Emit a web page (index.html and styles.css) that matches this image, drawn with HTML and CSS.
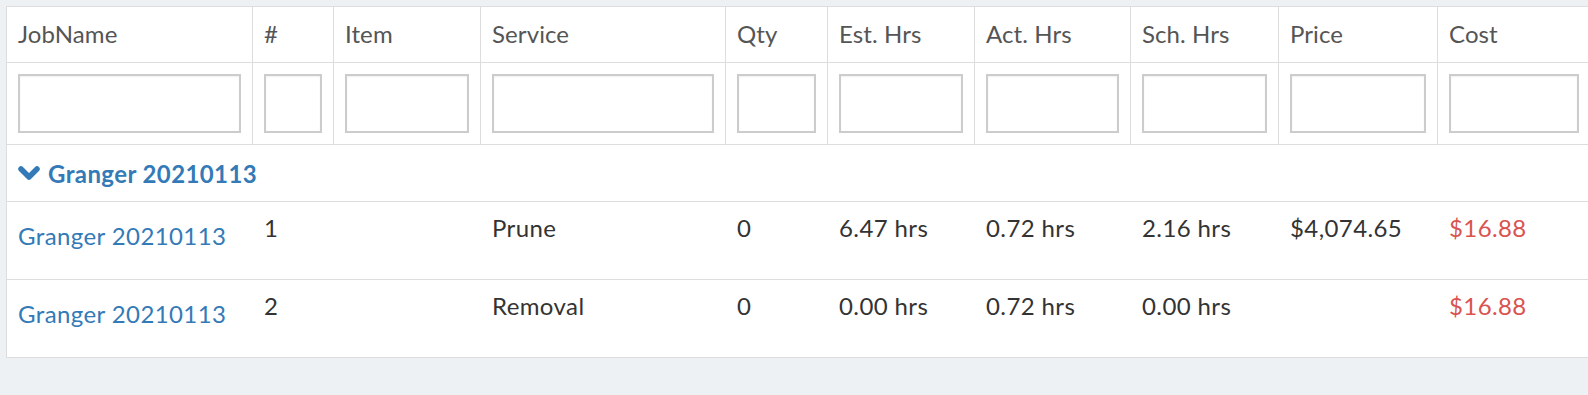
FILE: index.html
```html
<!DOCTYPE html>
<html lang="en">
<head>
<meta charset="utf-8">
<title>Jobs grid</title>
<link rel="stylesheet" href="styles.css">
</head>
<body>
<div class="page">
  <table class="grid">
    <colgroup>
      <col class="c-job"><col class="c-num"><col class="c-item"><col class="c-service"><col class="c-qty">
      <col class="c-est"><col class="c-act"><col class="c-sch"><col class="c-price"><col class="c-cost">
    </colgroup>
    <thead>
      <tr class="head-row">
        <th>JobName</th><th>#</th><th>Item</th><th>Service</th><th>Qty</th>
        <th>Est. Hrs</th><th>Act. Hrs</th><th>Sch. Hrs</th><th>Price</th><th>Cost</th>
      </tr>
      <tr class="filter-row">
        <th><input class="filter" type="text"></th>
        <th><input class="filter" type="text"></th>
        <th><input class="filter" type="text"></th>
        <th><input class="filter" type="text"></th>
        <th><input class="filter" type="text"></th>
        <th><input class="filter" type="text"></th>
        <th><input class="filter" type="text"></th>
        <th><input class="filter" type="text"></th>
        <th><input class="filter" type="text"></th>
        <th><input class="filter" type="text"></th>
      </tr>
    </thead>
    <tbody>
      <tr class="group-row">
        <td colspan="10">
          <span class="group-label">
            <svg class="chevron" width="22" height="15" viewBox="0 0 22 15" aria-hidden="true">
              <polyline points="3,3 11,11 19,3" fill="none" stroke="#337ab7" stroke-width="5.5" stroke-linecap="round" stroke-linejoin="round"/>
            </svg>Granger 20210113
          </span>
        </td>
      </tr>
      <tr class="data-row">
        <td class="job"><a href="#">Granger 20210113</a></td>
        <td>1</td>
        <td></td>
        <td>Prune</td>
        <td>0</td>
        <td>6.47 hrs</td>
        <td>0.72 hrs</td>
        <td>2.16 hrs</td>
        <td>$4,074.65</td>
        <td class="neg">$16.88</td>
      </tr>
      <tr class="data-row">
        <td class="job"><a href="#">Granger 20210113</a></td>
        <td>2</td>
        <td></td>
        <td>Removal</td>
        <td>0</td>
        <td>0.00 hrs</td>
        <td>0.72 hrs</td>
        <td>0.00 hrs</td>
        <td></td>
        <td class="neg">$16.88</td>
      </tr>
    </tbody>
  </table>
</div>
</body>
</html>
```
FILE: styles.css
```css
html, body {
  margin: 0;
  padding: 0;
  overflow: hidden;
  background: #eef1f4;
}

.page {
  padding: 6px 0 0 6px;
  font-family: Lato, "Open Sans", sans-serif;
  font-size: 24px;
  letter-spacing: 0.4px;
  color: #333;
}

.grid {
  table-layout: fixed;
  border-collapse: separate;
  border-spacing: 0;
  width: 1585px;
  background: #fff;
  border-top: 1px solid #ddd;
  border-left: 1px solid #ddd;
}

.c-job { width: 246px; }
.c-num { width: 81px; }
.c-item { width: 147px; }
.c-service { width: 245px; }
.c-qty { width: 102px; }
.c-est { width: 147px; }
.c-act { width: 156px; }
.c-sch { width: 148px; }
.c-price { width: 159px; }
.c-cost { width: 153px; }

.grid th,
.grid td {
  box-sizing: border-box;
  text-align: left;
  vertical-align: top;
  line-height: 30px;
  padding: 0 11px;
  border-bottom: 1px solid #ddd;
  white-space: nowrap;
  overflow: hidden;
}

.head-row th {
  font-weight: 400;
  letter-spacing: 0.1px;
  color: #555;
  height: 56px;
  padding-top: 12px;
  border-right: 1px solid #ddd;
}

.filter-row th {
  height: 82px;
  padding-top: 11px;
  border-right: 1px solid #ddd;
}

.filter {
  display: block;
  box-sizing: border-box;
  width: 100%;
  height: 59px;
  margin: 0;
  border: 2px solid #cccccc;
  border-radius: 0;
  background: #fff;
  box-shadow: inset 0 1px 2px rgba(0, 0, 0, 0.06);
  font: inherit;
  padding: 0 8px;
}

.group-row td {
  height: 57px;
  padding-top: 12px;
}

.group-label {
  display: inline-flex;
  align-items: center;
  gap: 8px;
  color: #337ab7;
  font-weight: 700;
}

.chevron {
  display: block;
}

.data-row td {
  height: 78px;
  padding-top: 11px;
}

.data-row td.job {
  padding-top: 19px;
}

.job a {
  color: #337ab7;
  text-decoration: none;
}

.neg {
  color: #d9534f;
}
```
